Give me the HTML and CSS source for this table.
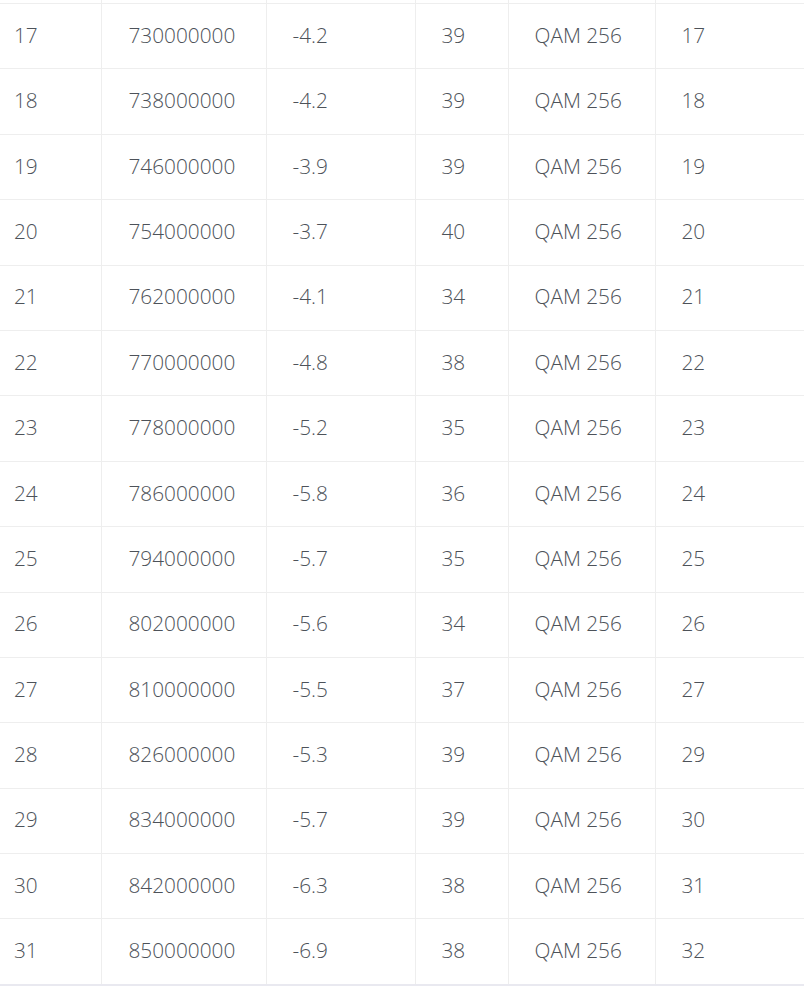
FILE: index.html
```html
<!DOCTYPE html>
<html>
<head>
<meta charset="utf-8">
<link rel="stylesheet" href="styles.css">
</head>
<body>
<table class="grid">
<colgroup>
<col class="c1"><col class="c2"><col class="c3"><col class="c4"><col class="c5"><col class="c6">
</colgroup>
<tbody>
<tr class="stub"><td></td><td></td><td></td><td></td><td></td><td></td></tr>
<tr><td>17</td><td>730000000</td><td>-4.2</td><td>39</td><td>QAM 256</td><td>17</td></tr>
<tr><td>18</td><td>738000000</td><td>-4.2</td><td>39</td><td>QAM 256</td><td>18</td></tr>
<tr><td>19</td><td>746000000</td><td>-3.9</td><td>39</td><td>QAM 256</td><td>19</td></tr>
<tr><td>20</td><td>754000000</td><td>-3.7</td><td>40</td><td>QAM 256</td><td>20</td></tr>
<tr><td>21</td><td>762000000</td><td>-4.1</td><td>34</td><td>QAM 256</td><td>21</td></tr>
<tr><td>22</td><td>770000000</td><td>-4.8</td><td>38</td><td>QAM 256</td><td>22</td></tr>
<tr><td>23</td><td>778000000</td><td>-5.2</td><td>35</td><td>QAM 256</td><td>23</td></tr>
<tr><td>24</td><td>786000000</td><td>-5.8</td><td>36</td><td>QAM 256</td><td>24</td></tr>
<tr><td>25</td><td>794000000</td><td>-5.7</td><td>35</td><td>QAM 256</td><td>25</td></tr>
<tr><td>26</td><td>802000000</td><td>-5.6</td><td>34</td><td>QAM 256</td><td>26</td></tr>
<tr><td>27</td><td>810000000</td><td>-5.5</td><td>37</td><td>QAM 256</td><td>27</td></tr>
<tr><td>28</td><td>826000000</td><td>-5.3</td><td>39</td><td>QAM 256</td><td>29</td></tr>
<tr><td>29</td><td>834000000</td><td>-5.7</td><td>39</td><td>QAM 256</td><td>30</td></tr>
<tr><td>30</td><td>842000000</td><td>-6.3</td><td>38</td><td>QAM 256</td><td>31</td></tr>
<tr class="last"><td>31</td><td>850000000</td><td>-6.9</td><td>38</td><td>QAM 256</td><td>32</td></tr>
</tbody>
</table>
</body>
</html>
```
FILE: styles.css
```css
html, body {
  margin: 0;
  padding: 0;
  background: #ffffff;
}
.grid {
  width: 804px;
  border-collapse: collapse;
  table-layout: fixed;
  font-family: "Open Sans", "Liberation Sans", sans-serif;
  font-weight: 300;
  font-size: 20.8px;
  color: #4d5259;
}
.c1 { width: 101px; }
.c2 { width: 165px; }
.c3 { width: 149px; }
.c4 { width: 93px; }
.c5 { width: 147px; }
.c6 { width: auto; }
.grid td {
  height: 62.4px;
  padding: 0 0 2px 26px;
  vertical-align: middle;
  border-top: 1px solid #eeeeee;
  border-bottom: 1px solid #eeeeee;
  border-left: 1px solid #eeeeee;
  white-space: nowrap;
  line-height: 1;
}
.grid td:first-child {
  border-left: none;
  padding-left: 14px;
}
.grid td:nth-child(2) {
  padding-left: 27px;
}
.grid tr.stub td {
  height: 3px;
  border-top: none;
  padding-top: 0;
  padding-bottom: 0;
}
.grid tr.last td {
  border-bottom: 2px solid #e9e9f0;
}
```
